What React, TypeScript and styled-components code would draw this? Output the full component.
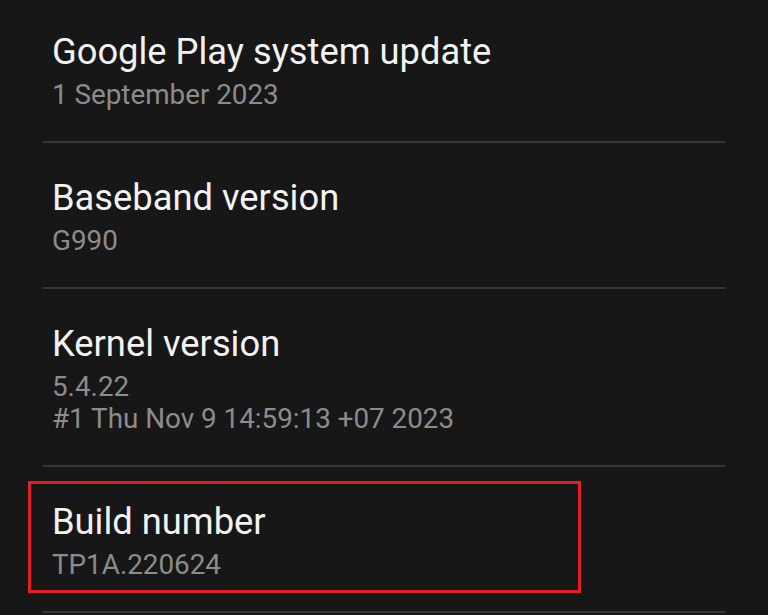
import React from 'react';
import styled, { createGlobalStyle } from 'styled-components';

const GlobalStyle = createGlobalStyle`
  html, body {
    margin: 0;
    padding: 0;
    background: #171717;
  }
  body {
    width: 768px;
    height: 615px;
    overflow: hidden;
    font-family: Roboto, 'Noto Sans', sans-serif;
  }
`;

const Screen = styled.div`
  width: 768px;
  height: 615px;
  background: #171717;
  overflow: hidden;
`;

const List = styled.div`
  display: flex;
  flex-direction: column;
  margin: 0 43px;
`;

const Item = styled.div`
  position: relative;
  padding: 33px 0 30px 9px;
  border-bottom: 2px solid #363636;

  &:first-child {
    padding-top: 30px;
  }
`;

const Title = styled.div`
  font-size: 36.3px;
  line-height: 44px;
  color: #f2f2f2;
  white-space: nowrap;
`;

const Summary = styled.div`
  margin-top: 5px;
  font-size: 27.8px;
  line-height: 32px;
  color: #8c8c8c;
  white-space: nowrap;
`;

const Highlight = styled.div`
  position: absolute;
  left: -15px;
  top: 14px;
  width: 553px;
  height: 112px;
  box-sizing: border-box;
  border: 3.5px solid #e51d26;
  pointer-events: none;
`;

type Entry = {
  title: string;
  lines: string[];
  marked?: boolean;
};

const entries: Entry[] = [
  { title: 'Google Play system update', lines: ['1 September 2023'] },
  { title: 'Baseband version', lines: ['G990'] },
  { title: 'Kernel version', lines: ['5.4.22', '#1 Thu Nov 9 14:59:13 +07 2023'] },
  { title: 'Build number', lines: ['TP1A.220624'], marked: true },
];

export default function App() {
  return (
    <Screen>
      <GlobalStyle />
      <List>
        {entries.map((e) => (
          <Item key={e.title}>
            <Title>{e.title}</Title>
            <Summary>
              {e.lines.map((l) => (
                <div key={l}>{l}</div>
              ))}
            </Summary>
            {e.marked && <Highlight />}
          </Item>
        ))}
      </List>
    </Screen>
  );
}
